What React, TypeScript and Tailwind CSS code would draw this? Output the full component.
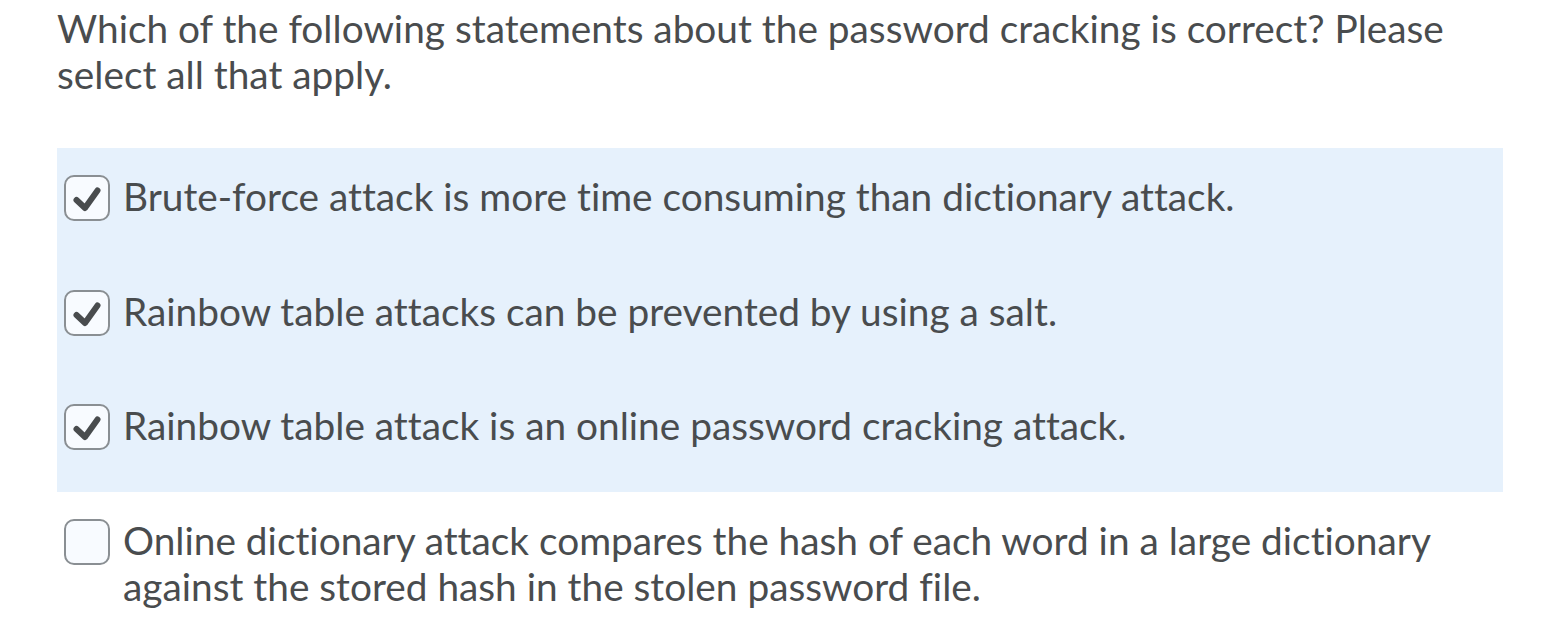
import React from "react"

type Choice = { text: string; checked: boolean }

const choices: Choice[] = [
  { text: "Brute-force attack is more time consuming than dictionary attack.", checked: true },
  { text: "Rainbow table attacks can be prevented by using a salt.", checked: true },
  { text: "Rainbow table attack is an online password cracking attack.", checked: true },
  {
    text: "Online dictionary attack compares the hash of each word in a large dictionary against the stored hash in the stolen password file.",
    checked: false,
  },
]

function CheckBox({ checked }: { checked: boolean }) {
  return (
    <div className="w-[46px] h-[46px] shrink-0 rounded-[10px] border-2 border-[#8a8f93] bg-[#f8fbff] flex items-center justify-center">
      {checked && (
        <svg width="42" height="42" viewBox="0 0 42 42" fill="none">
          <path
            d="M10.5 23 L19 31 L31.5 13.5"
            stroke="#494c4e"
            strokeWidth="6"
            strokeLinecap="round"
            strokeLinejoin="round"
          />
        </svg>
      )}
    </div>
  )
}

export default function App() {
  return (
    <div className="min-h-screen bg-white text-[#494c4e] font-['Lato',sans-serif] [font-variant-ligatures:none] pl-[57px] pr-[43px] pt-[5px]">
      <h2 className="text-[38.8px] leading-[46px] font-normal max-w-[1420px]">
        Which of the following statements about the password cracking is correct? Please select all that apply.
      </h2>
      <div className="mt-[51px]">
        {choices.map((c, i) => (
          <label
            key={i}
            className={`flex items-start gap-[13px] pl-[7px] pt-[27px] pb-[41.7px] ${c.checked ? "bg-[#e6f1fc]" : ""}`}
          >
            <CheckBox checked={c.checked} />
            <span className="text-[38.8px] leading-[46px] max-w-[1340px] -mt-[2px]">{c.text}</span>
          </label>
        ))}
      </div>
    </div>
  )
}
